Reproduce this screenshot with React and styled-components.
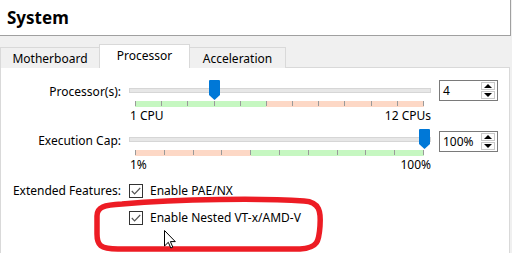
import React from 'react'
import styled, { createGlobalStyle } from 'styled-components'

const GlobalStyle = createGlobalStyle`
  html, body {
    margin: 0;
    padding: 0;
    background: #f0f0f0;
  }
  body {
    font-family: 'Noto Sans', 'Open Sans', sans-serif;
    font-size: 12px;
    color: #000;
    overflow: hidden;
  }
`

const GREEN = '#c6f7c1'
const RED = '#fdd8c6'

const Page = styled.div`
  position: relative;
  width: 512px;
  height: 253px;
  overflow: hidden;
`

const Header = styled.div`
  box-sizing: border-box;
  width: 511px;
  height: 36px;
  background: #fff;
  border-right: 1px solid #a0a0a0;
  border-bottom: 1px solid #a0a0a0;
  padding-left: 7px;
  display: flex;
  align-items: center;
  font-size: 17px;
  font-weight: 700;
`

const TabBar = styled.div`
  display: flex;
  align-items: flex-end;
  height: 24px;
  margin-top: 8px;
  margin-bottom: -1px;
  position: relative;
  z-index: 1;
`

const Tab = styled.div`
  box-sizing: border-box;
  width: ${p => p.$w}px;
  height: ${p => (p.$active ? 24 : 21)}px;
  margin-left: -1px;
  border: 1px solid #d9d9d9;
  border-bottom: none;
  background: ${p => (p.$active ? '#fff' : '#f0f0f0')};
  position: relative;
  z-index: ${p => (p.$active ? 2 : 1)};
  display: flex;
  align-items: center;
  justify-content: center;
  padding-bottom: ${p => (p.$active ? 2 : 0)}px;
  &:first-child {
    margin-left: 0;
  }
`

const Panel = styled.div`
  box-sizing: border-box;
  width: 510px;
  height: 200px;
  background: #fff;
  border: 1px solid #d9d9d9;
  padding-top: 12px;
  display: flex;
  flex-direction: column;
`

const Row = styled.div`
  display: grid;
  grid-template-columns: 120px 302px 59px;
  column-gap: 8px;
  margin-top: ${p => p.$mt || 0}px;
`

const Label = styled.div`
  text-align: right;
  white-space: nowrap;
  line-height: ${p => p.$lh || 20}px;
  padding-top: ${p => p.$pt || 0}px;
`

const SliderBox = styled.div`
  display: flex;
  flex-direction: column;
`

const TrackWrap = styled.div`
  position: relative;
  height: 20px;
  display: flex;
  align-items: center;
`

const Track = styled.div`
  flex: 1;
  box-sizing: border-box;
  height: 5px;
  background: #e7e7e7;
  border: 1px solid #d6d6d6;
`

const Thumb = styled.svg`
  position: absolute;
  top: 0;
  width: 11px;
  height: 20px;
  margin-left: -5px;
`

const Scale = styled.div`
  margin: 1px 7px 0 6px;
  height: 6px;
  display: flex;
  justify-content: space-between;
  background: linear-gradient(
    to right,
    ${p => p.$first} 0%,
    ${p => p.$first} ${p => p.$split}%,
    ${p => p.$second} ${p => p.$split}%,
    ${p => p.$second} 100%
  );
`

const Tick = styled.span`
  width: 1px;
  height: 5px;
  background: #9a9a9a;
`

const Ends = styled.div`
  display: flex;
  justify-content: space-between;
  margin-top: 2px;
  padding-left: 1px;
  line-height: 14px;
`

const Spin = styled.div`
  box-sizing: border-box;
  height: 21px;
  margin-top: ${p => p.$mt || 0}px;
  border: 1px solid #7a7a7a;
  background: #fff;
  display: flex;
  align-items: center;
  justify-content: space-between;
  padding-left: 3px;
  padding-right: 2px;
`

const SpinButtons = styled.div`
  display: flex;
  flex-direction: column;
  gap: 1px;
`

const SpinButton = styled.div`
  box-sizing: border-box;
  width: 14px;
  height: 8px;
  border: 1px solid #c8c8c8;
  background: #fdfdfd;
  display: flex;
  align-items: center;
  justify-content: center;
`

const CheckCell = styled.label`
  grid-column: 2 / span 2;
  display: flex;
  align-items: center;
  gap: 7px;
  height: 17px;
`

const Box = styled.span`
  box-sizing: border-box;
  width: 14px;
  height: 14px;
  border: 1px solid #333;
  background: #fff;
  display: flex;
  align-items: center;
  justify-content: center;
`

const Annotation = styled.svg`
  position: absolute;
  left: 0;
  top: 0;
  width: 512px;
  height: 253px;
  pointer-events: none;
`

const Cursor = styled.svg`
  position: absolute;
  left: 164px;
  top: 230px;
  width: 12px;
  height: 19px;
  pointer-events: none;
`

const Arrow = ({ up }) => (
  <svg width="8" height="4" viewBox="0 0 8 4">
    <path d={up ? 'M0 4 L4 0 L8 4 Z' : 'M0 0 L8 0 L4 4 Z'} fill="#000" />
  </svg>
)

const SpinBox = ({ value, mt }) => (
  <Spin $mt={mt}>
    <span>{value}</span>
    <SpinButtons>
      <SpinButton><Arrow up /></SpinButton>
      <SpinButton><Arrow /></SpinButton>
    </SpinButtons>
  </Spin>
)

const Slider = ({ steps, pos, split, first, second, min, max }) => {
  const frac = pos / steps
  return (
    <SliderBox>
      <TrackWrap>
        <Track />
        <Thumb
          viewBox="0 0 11 20"
          style={{ left: `calc(6px + ${frac} * (100% - 13px))` }}
        >
          <path d="M1 0 H10 Q11 0 11 1 V15 L5.5 20 L0 15 V1 Q0 0 1 0 Z" fill="#0078d7" />
        </Thumb>
      </TrackWrap>
      <Scale $first={first} $second={second} $split={split}>
        {Array.from({ length: steps + 1 }, (_, i) => (
          <Tick key={i} />
        ))}
      </Scale>
      <Ends>
        <span>{min}</span>
        <span>{max}</span>
      </Ends>
    </SliderBox>
  )
}

const Check = ({ children }) => (
  <CheckCell>
    <Box>
      <svg width="10" height="8" viewBox="0 0 10 8">
        <path d="M0.8 4 L3.6 6.8 L9.2 1" fill="none" stroke="#555" strokeWidth="1.2" />
      </svg>
    </Box>
    <span>{children}</span>
  </CheckCell>
)

const App = () => {
  return (
    <>
      <GlobalStyle />
      <Page>
        <Header>System</Header>
        <TabBar>
          <Tab $w={100}>Motherboard</Tab>
          <Tab $w={91} $active>Processor</Tab>
          <Tab $w={97}>Acceleration</Tab>
        </TabBar>
        <Panel>
          <Row>
            <Label $pt={2}>Processor(s):</Label>
            <Slider
              steps={11}
              pos={3}
              split={(5 / 11) * 100}
              first={GREEN}
              second={RED}
              min="1 CPU"
              max="12 CPUs"
            />
            <SpinBox value="4" />
          </Row>
          <Row $mt={6}>
            <Label $pt={2}>Execution Cap:</Label>
            <Slider
              steps={10}
              pos={10}
              split={40}
              first={RED}
              second={GREEN}
              min="1%"
              max="100%"
            />
            <SpinBox value="100%" mt={2} />
          </Row>
          <Row $mt={10}>
            <Label $lh={17}>Extended Features:</Label>
            <Check>Enable PAE/NX</Check>
          </Row>
          <Row $mt={10}>
            <span />
            <Check>Enable Nested VT-x/AMD-V</Check>
          </Row>
        </Panel>
        <Annotation viewBox="0 0 512 253">
          <path
            d="M122 204 C180 199 262 198 304 201 C320 202 321 212 320 226 C319 241 318 248 300 249 L118 249 C100 249 97 245 97 234 L97 216 C97 207 104 205 122 204 Z"
            fill="none"
            stroke="#ed1c24"
            strokeWidth="5.5"
          />
        </Annotation>
        <Cursor viewBox="0 0 12 19">
          <path
            d="M0.5 0.5 V16 L4.3 12.3 L6.8 18 L8.8 17.1 L6.4 11.6 H11.3 Z"
            fill="#fff"
            stroke="#000"
            strokeWidth="1"
            strokeLinejoin="miter"
          />
        </Cursor>
      </Page>
    </>
  )
}

export default App
